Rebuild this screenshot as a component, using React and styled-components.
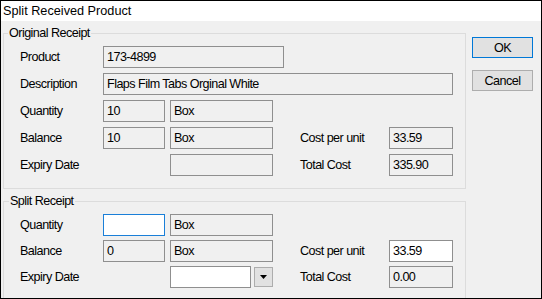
import React from 'react'
import styled, { createGlobalStyle } from 'styled-components'

const FONT = `"Liberation Sans", Arial, sans-serif`

const GlobalStyle = createGlobalStyle`
  body {
    margin: 0;
    background: #fff;
  }
`

const Window = styled.div`
  width: 542px;
  height: 299px;
  box-sizing: border-box;
  border: 1px solid #000;
  background: #f0f0f0;
  overflow: hidden;
  display: flex;
  flex-direction: column;
  font-family: ${FONT};
  color: #000;
`

const TitleBar = styled.div`
  flex: none;
  height: 20px;
  padding-left: 2px;
  background: #fff;
  font-size: 12.7px;
  line-height: 20px;
`

const Body = styled.div`
  flex: 1;
  min-height: 0;
  display: flex;
  gap: 6px;
  padding: 5px 0 0 2px;
`

const Groups = styled.div`
  width: 463px;
  display: flex;
  flex-direction: column;
  gap: 5px;
`

const GroupBox = styled.fieldset`
  flex: none;
  margin: 0;
  padding: 0;
  min-width: 0;
  border: 1px solid #dcdcdc;
`

const GroupTitle = styled.legend`
  margin-left: ${p => p.$indent}px;
  padding: 0 1px;
  font-size: 12.6px;
  letter-spacing: -0.55px;
  line-height: 14px;
`

const FieldGrid = styled.div`
  display: grid;
  grid-template-columns: 83px 62px 5px 103px 27px 89px 64px;
  grid-auto-rows: 22px;
  row-gap: ${p => p.$gap}px;
  align-items: center;
  padding: 6px 0 ${p => p.$bottom}px 16px;
`

const Label = styled.span`
  grid-column: ${p => p.$col || 1};
  font-size: 12.6px;
  letter-spacing: -0.55px;
  line-height: 14px;
  white-space: nowrap;
`

const TextBox = styled.input`
  grid-column: ${p => p.$col || 'auto'};
  justify-self: start;
  width: ${p => (p.$w ? `${p.$w}px` : '100%')};
  height: 22px;
  box-sizing: border-box;
  margin: 0;
  padding: 0 3px;
  border: 1px solid ${p => (p.$focused ? '#1a7fd8' : '#8f8f8f')};
  border-radius: 0;
  background: ${p => (p.readOnly ? '#f0f0f0' : '#fff')};
  font-family: ${FONT};
  font-size: 12.6px;
  letter-spacing: -0.55px;
  color: #000;
  outline: none;
`

const DatePicker = styled.div`
  grid-column: 4;
  display: flex;
  align-items: center;
  gap: 3px;
`

const DropButton = styled.button`
  width: 19px;
  height: 20px;
  box-sizing: border-box;
  margin: 0;
  padding: 0;
  border: 1px solid #adadad;
  background: #e1e1e1;
  display: flex;
  align-items: center;
  justify-content: center;
`

const ButtonColumn = styled.div`
  display: flex;
  flex-direction: column;
  gap: 12px;
  padding-top: 11px;
`

const DialogButton = styled.button`
  width: 61px;
  height: 21px;
  box-sizing: border-box;
  margin: 0;
  padding: 0;
  border: 1px solid ${p => (p.$default ? '#0078d7' : '#adadad')};
  background: #e1e1e1;
  font-family: ${FONT};
  font-size: 12.6px;
  letter-spacing: -0.55px;
  color: #000;
`

function DownArrow () {
  return (
    <svg width="7" height="4" viewBox="0 0 7 4">
      <polygon points="0,0 7,0 3.5,4" fill="#000" />
    </svg>
  )
}

export default function App () {
  return (
    <>
      <GlobalStyle />
      <Window>
        <TitleBar>Split Received Product</TitleBar>
        <Body>
          <Groups>
            <GroupBox>
              <GroupTitle $indent={4}>Original Receipt</GroupTitle>
              <FieldGrid $gap={5} $bottom={12}>
                <Label>Product</Label>
                <TextBox $col="2 / -1" $w={181} readOnly defaultValue="173-4899" />

                <Label>Description</Label>
                <TextBox $col="2 / -1" readOnly defaultValue="Flaps Film Tabs Orginal White" />

                <Label>Quantity</Label>
                <TextBox $col={2} readOnly defaultValue="10" />
                <TextBox $col={4} readOnly defaultValue="Box" />

                <Label>Balance</Label>
                <TextBox $col={2} readOnly defaultValue="10" />
                <TextBox $col={4} readOnly defaultValue="Box" />
                <Label $col={6}>Cost per unit</Label>
                <TextBox $col={7} readOnly defaultValue="33.59" />

                <Label>Expiry Date</Label>
                <TextBox $col={4} readOnly defaultValue="" />
                <Label $col={6}>Total Cost</Label>
                <TextBox $col={7} readOnly defaultValue="335.90" />
              </FieldGrid>
            </GroupBox>

            <GroupBox>
              <GroupTitle $indent={5}>Split Receipt</GroupTitle>
              <FieldGrid $gap={4} $bottom={10}>
                <Label>Quantity</Label>
                <TextBox $col={2} $focused defaultValue="" />
                <TextBox $col={4} readOnly defaultValue="Box" />

                <Label>Balance</Label>
                <TextBox $col={2} readOnly defaultValue="0" />
                <TextBox $col={4} readOnly defaultValue="Box" />
                <Label $col={6}>Cost per unit</Label>
                <TextBox $col={7} defaultValue="33.59" />

                <Label>Expiry Date</Label>
                <DatePicker>
                  <TextBox $w={81} defaultValue="" />
                  <DropButton><DownArrow /></DropButton>
                </DatePicker>
                <Label $col={6}>Total Cost</Label>
                <TextBox $col={7} readOnly defaultValue="0.00" />
              </FieldGrid>
            </GroupBox>
          </Groups>

          <ButtonColumn>
            <DialogButton $default>OK</DialogButton>
            <DialogButton>Cancel</DialogButton>
          </ButtonColumn>
        </Body>
      </Window>
    </>
  )
}
